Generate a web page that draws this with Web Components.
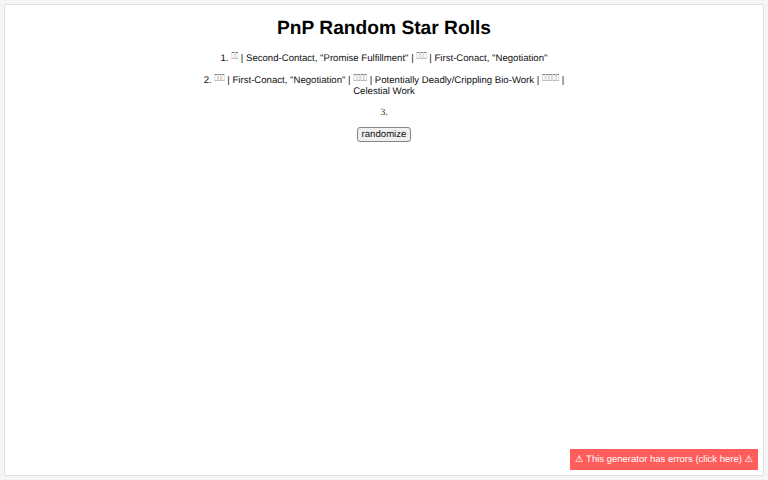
<!DOCTYPE html>
<html><head><meta charset="utf-8">
<style>
html,body{margin:0;height:100%;background:#f5f5f5;}
body{padding:4px;box-sizing:border-box;height:480px;overflow:hidden;display:flex;}
</style></head>
<body>
<gen-page>
<h1 slot="title">PnP Random Star Rolls</h1>
<roll-item><tofu-run>&#xE000;&#xE000;</tofu-run> | Second-Contact, "Promise Fulfillment" | <tofu-run>&#xE000;&#xE000;&#xE000;</tofu-run> | First-Conact, "Negotiation"</roll-item>
<roll-item><tofu-run>&#xE000;&#xE000;&#xE000;</tofu-run> | First-Conact, "Negotiation" | <tofu-run>&#xE000;&#xE000;&#xE000;&#xE000;</tofu-run> | Potentially Deadly/Crippling Bio-Work | <tofu-run>&#xE000;&#xE000;&#xE000;&#xE000;&#xE000;</tofu-run> |<br>Celestial Work</roll-item>
<roll-item></roll-item>
</gen-page>
<script>
class GenPage extends HTMLElement{constructor(){super();this.attachShadow({mode:'open'}).innerHTML=`
<style>
:host{display:flex;flex-direction:column;align-items:center;flex:1;box-sizing:border-box;background:#fff;border:1px solid #ddd;border-radius:2px;font-family:"Liberation Serif",serif;font-size:9.6px;color:#000;position:relative;text-align:center;padding-top:13px;text-rendering:geometricPrecision}
::slotted(h1){font:bold 19.2px/21px "Liberation Sans",sans-serif;margin:0 0 14px}
ol{list-style:none;margin:0;padding:0;width:384px;display:flex;flex-direction:column;gap:11px}
gen-button{margin-top:9px}
err-badge{position:absolute;right:5px;bottom:5px}
</style>
<slot name="title"></slot>
<ol><slot></slot></ol>
<gen-button>randomize</gen-button>
<err-badge>⚠ This generator has errors (click here) ⚠</err-badge>`;}}
class RollItem extends HTMLElement{constructor(){super();this.attachShadow({mode:'open'}).innerHTML=`
<style>:host{display:block;line-height:11px;color:#111;margin-top:-1px}
:host(.filled){font-family:"Liberation Sans",sans-serif;margin-top:0}
.t{font-family:"Liberation Sans",sans-serif}</style>
<span class="n"></span> <span class="t"><slot></slot></span>`;}
connectedCallback(){this.classList.toggle('filled',this.textContent.trim()!=='');this.shadowRoot.querySelector('.n').textContent=([...this.parentNode.children].filter(e=>e.localName==='roll-item').indexOf(this)+1)+'.';}}
class TofuRun extends HTMLElement{constructor(){super();this.attachShadow({mode:'open'}).innerHTML=`
<style>:host{display:inline-block;vertical-align:baseline;color:#000;font-size:4.6px;line-height:1}
span{display:inline-block;transform:scaleY(2.1);transform-origin:50% 100%;white-space:nowrap}</style><span><slot></slot></span>`;}}
class GenButton extends HTMLElement{constructor(){super();this.attachShadow({mode:'open'}).innerHTML=`
<style>:host{display:block}
button{font:9.6px/12px "Liberation Sans",sans-serif;text-rendering:geometricPrecision;color:#111;background:#efefef;border:1px solid #858585;border-radius:3px;padding:1px 4px;height:15px;box-sizing:border-box;display:block}</style>
<button><slot></slot></button>`;}}
class ErrBadge extends HTMLElement{constructor(){super();this.attachShadow({mode:'open'}).innerHTML=`
<style>:host{display:block;background:#ff5c5c;color:#fff;font:9.5px/21px "Liberation Sans",sans-serif;padding:0 5px;white-space:nowrap}</style><slot></slot>`;}}
customElements.define('tofu-run',TofuRun);
customElements.define('roll-item',RollItem);
customElements.define('gen-button',GenButton);
customElements.define('err-badge',ErrBadge);
customElements.define('gen-page',GenPage);
</script>
</body></html>
